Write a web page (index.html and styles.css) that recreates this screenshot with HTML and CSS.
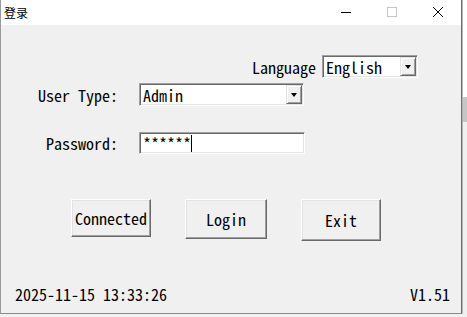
FILE: index.html
```html
<!DOCTYPE html>
<html lang="zh-CN">
  <head>
    <meta charset="UTF-8" />
    <meta name="viewport" content="width=device-width, initial-scale=1.0" />
    <title>登录</title>
    <link rel="stylesheet" href="styles.css">
  </head>
  <body>
    <div class="desk">
      <div class="window">
        <div class="titlebar">
          <span class="title">登录</span>
          <div class="caption-btns">
            <span class="cap">
              <svg width="10" height="10" viewBox="0 0 10 10"><path d="M0 5.5H10" stroke="#000" stroke-width="1" /></svg>
            </span>
            <span class="cap">
              <svg width="10" height="10" viewBox="0 0 10 10"><rect x="0.5" y="0.5" width="9" height="9" fill="none" stroke="#c8c8c8" stroke-width="1" /></svg>
            </span>
            <span class="cap">
              <svg width="10" height="10" viewBox="0 0 10 10"><path d="M0 0L10 10M10 0L0 10" stroke="#000" stroke-width="1" /></svg>
            </span>
          </div>
        </div>

        <div class="client">
          <div class="lang-row">
            <span class="label">Language</span>
            <div class="combo lang">
              <span class="combo-text">English</span>
              <span class="drop"><span class="arrow"></span></span>
            </div>
          </div>

          <div class="form">
            <span class="label">User Type:</span>
            <div class="combo user">
              <span class="combo-text">Admin</span>
              <span class="drop"><span class="arrow"></span></span>
            </div>

            <span class="label">Password:</span>
            <div class="edit">
              <span class="combo-text">******</span><span class="caret"></span>
            </div>
          </div>

          <div class="buttons">
            <button class="btn btn-connected">Connected</button>
            <button class="btn btn-login">Login</button>
            <button class="btn btn-exit">Exit</button>
          </div>

          <div class="footer">
            <span>2025-11-15 13:33:26</span>
            <span>V1.51</span>
          </div>
        </div>
      </div>
      <div class="side">
        <div class="thumb"></div>
      </div>
    </div>
  </body>
</html>
```

FILE: styles.css
```css
html,
body {
  margin: 0;
  padding: 0;
}
body {
  width: 467px;
  height: 317px;
  overflow: hidden;
  background-color: #f2f2f2;
  color: #000;
  font-family: "Noto Sans Mono CJK SC", "DejaVu Sans Mono", monospace;
  font-size: 16px;
}
.desk {
  display: flex;
  align-items: flex-start;
}
.window {
  width: 460px;
  height: 313px;
  border-left: 1px solid #9a9a9a;
  border-right: 1px solid #6e6e6e;
  border-bottom: 1px solid #8a8a8a;
  box-shadow: 1px 0 0 #b8b8b8;
  display: flex;
  flex-direction: column;
}
.titlebar {
  height: 25px;
  background-color: #fff;
  display: flex;
  align-items: center;
  justify-content: space-between;
}
.title {
  font-family: "Noto Sans CJK SC", sans-serif;
  font-size: 12px;
  padding-left: 3px;
  line-height: 25px;
}
.caption-btns {
  display: flex;
}
.cap {
  width: 46px;
  height: 25px;
  display: flex;
  align-items: center;
  justify-content: center;
}
.cap svg {
  display: block;
  margin-top: -1px;
}
.client {
  flex: 1;
  background-color: #f0f0f0;
  display: flex;
  flex-direction: column;
}
.label {
  white-space: pre;
  line-height: 16px;
}
.lang-row {
  margin-top: 30px;
  padding-right: 43px;
  display: flex;
  justify-content: flex-end;
  align-items: center;
  gap: 6px;
}
.combo,
.edit {
  box-sizing: border-box;
  background-color: #fff;
  border-top: 1px solid #a0a0a0;
  border-left: 1px solid #a0a0a0;
  border-right: 1px solid #fff;
  border-bottom: 1px solid #fff;
  box-shadow: inset 1px 1px 0 #696969, inset -1px -1px 0 #e3e3e3;
  display: flex;
  align-items: center;
}
.combo-text {
  padding-left: 3px;
  line-height: 16px;
  white-space: pre;
}
.combo .combo-text {
  flex: 1;
}
.drop {
  width: 16px;
  height: 19px;
  box-sizing: border-box;
  margin-right: 1px;
  background-color: #f0f0f0;
  border-top: 1px solid #e3e3e3;
  border-left: 1px solid #e3e3e3;
  border-right: 1px solid #696969;
  border-bottom: 1px solid #696969;
  box-shadow: inset 1px 1px 0 #fff, inset -1px -1px 0 #a0a0a0;
  display: flex;
  align-items: center;
  justify-content: center;
}
.arrow {
  width: 0;
  height: 0;
  border-left: 3.5px solid transparent;
  border-right: 3.5px solid transparent;
  border-top: 4px solid #000;
}
.lang {
  width: 96px;
  height: 23px;
}
.form {
  margin-top: 5px;
  display: grid;
  grid-template-columns: 117px 165px;
  column-gap: 21px;
  row-gap: 26px;
  align-items: center;
}
.form .label {
  text-align: right;
}
.user {
  height: 23px;
}
.edit {
  width: 166px;
  height: 22px;
}
.caret {
  width: 1px;
  height: 17px;
  background-color: #000;
}
.buttons {
  margin-top: 45px;
  padding-left: 70px;
  display: flex;
  align-items: flex-start;
  gap: 34px;
}
.btn {
  box-sizing: border-box;
  font-family: inherit;
  font-size: inherit;
  line-height: 16px;
  color: #000;
  background-color: #f0f0f0;
  border-top: 1px solid #fff;
  border-left: 1px solid #fff;
  border-right: 1px solid #696969;
  border-bottom: 1px solid #696969;
  box-shadow: inset -1px -1px 0 #a0a0a0, inset 1px 1px 0 #e3e3e3;
  padding: 0;
  white-space: pre;
}
.btn-connected {
  width: 80px;
  height: 38px;
}
.btn-login {
  width: 82px;
  height: 40px;
}
.btn-exit {
  width: 80px;
  height: 42px;
}
.footer {
  margin-top: 45px;
  padding: 0 11px 0 14px;
  display: flex;
  justify-content: space-between;
  line-height: 16px;
}
.side {
  flex: 1;
  height: 317px;
  margin-left: 1px;
  background-color: #fff;
  display: flex;
  flex-direction: column;
}
.thumb {
  margin-top: 97px;
  height: 25px;
  background-color: #c6c6c6;
}
.side::after {
  content: "";
  flex: 1;
  background-color: #f0f0f0;
}
```
